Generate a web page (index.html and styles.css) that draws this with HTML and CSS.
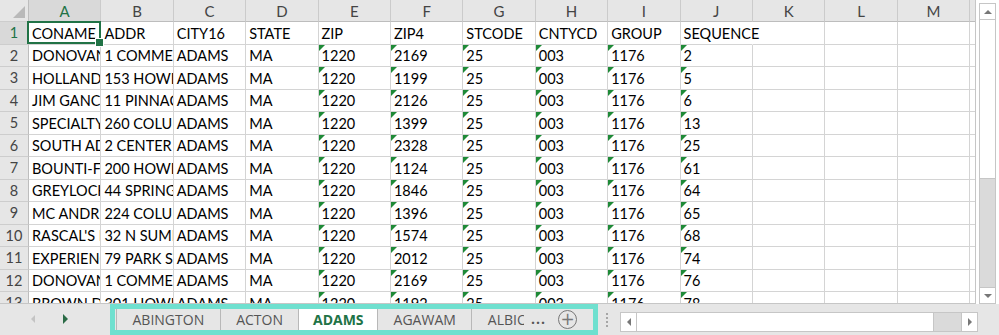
FILE: index.html
```html
<!DOCTYPE html>
<html lang="en">
<head>
    <meta charset="UTF-8">
    <meta name="viewport" content="width=device-width, initial-scale=1.0">
    <title>ADAMS - Sheet</title>
    <link rel="stylesheet" href="styles.css">
</head>
<body>
    <div class="window">
        <!-- Grid + vertical scrollbar -->
        <div class="main">
            <div class="sheet">
                <div class="row head">
                    <span class="corner"></span><span class="sel">A</span><span>B</span><span>C</span><span>D</span><span>E</span><span>F</span><span>G</span><span>H</span><span>I</span><span>J</span><span>K</span><span>L</span><span>M</span><span></span>
                </div>
                <div class="row">
                    <span class="sel">1</span><span class="cur">CONAME</span><span>ADDR</span><span>CITY16</span><span>STATE</span><span>ZIP</span><span>ZIP4</span><span>STCODE</span><span>CNTYCD</span><span>GROUP</span><span class="spill">SEQUENCE</span><span></span><span></span><span></span><span></span>
                </div>
                <div class="row">
                    <span>2</span><span>DONOVAN AUTO</span><span>1 COMMERCIAL ST</span><span>ADAMS</span><span>MA</span><span class="t">1220</span><span class="t">2169</span><span class="t">25</span><span class="t">003</span><span class="t">1176</span><span class="t">2</span><span></span><span></span><span></span><span></span>
                </div>
                <div class="row">
                    <span>3</span><span>HOLLAND</span><span>153 HOWLAND AVE</span><span>ADAMS</span><span>MA</span><span class="t">1220</span><span class="t">1199</span><span class="t">25</span><span class="t">003</span><span class="t">1176</span><span class="t">5</span><span></span><span></span><span></span><span></span>
                </div>
                <div class="row">
                    <span>4</span><span>JIM GANCI INC</span><span>11 PINNACLE ST</span><span>ADAMS</span><span>MA</span><span class="t">1220</span><span class="t">2126</span><span class="t">25</span><span class="t">003</span><span class="t">1176</span><span class="t">6</span><span></span><span></span><span></span><span></span>
                </div>
                <div class="row">
                    <span>5</span><span>SPECIALTY MINERALS</span><span>260 COLUMBIA ST</span><span>ADAMS</span><span>MA</span><span class="t">1220</span><span class="t">1399</span><span class="t">25</span><span class="t">003</span><span class="t">1176</span><span class="t">13</span><span></span><span></span><span></span><span></span>
                </div>
                <div class="row">
                    <span>6</span><span>SOUTH ADAMS</span><span>2 CENTER ST</span><span>ADAMS</span><span>MA</span><span class="t">1220</span><span class="t">2328</span><span class="t">25</span><span class="t">003</span><span class="t">1176</span><span class="t">25</span><span></span><span></span><span></span><span></span>
                </div>
                <div class="row">
                    <span>7</span><span>BOUNTI-FUL</span><span>200 HOWLAND AVE</span><span>ADAMS</span><span>MA</span><span class="t">1220</span><span class="t">1124</span><span class="t">25</span><span class="t">003</span><span class="t">1176</span><span class="t">61</span><span></span><span></span><span></span><span></span>
                </div>
                <div class="row">
                    <span>8</span><span>GREYLOCK FED</span><span>44 SPRING ST</span><span>ADAMS</span><span>MA</span><span class="t">1220</span><span class="t">1846</span><span class="t">25</span><span class="t">003</span><span class="t">1176</span><span class="t">64</span><span></span><span></span><span></span><span></span>
                </div>
                <div class="row">
                    <span>9</span><span>MC ANDREWS</span><span>224 COLUMBIA ST</span><span>ADAMS</span><span>MA</span><span class="t">1220</span><span class="t">1396</span><span class="t">25</span><span class="t">003</span><span class="t">1176</span><span class="t">65</span><span></span><span></span><span></span><span></span>
                </div>
                <div class="row">
                    <span>10</span><span>RASCAL'S PUB</span><span>32 N SUMMER ST</span><span>ADAMS</span><span>MA</span><span class="t">1220</span><span class="t">1574</span><span class="t">25</span><span class="t">003</span><span class="t">1176</span><span class="t">68</span><span></span><span></span><span></span><span></span>
                </div>
                <div class="row">
                    <span>11</span><span>EXPERIENCE</span><span>79 PARK ST</span><span>ADAMS</span><span>MA</span><span class="t">1220</span><span class="t">2012</span><span class="t">25</span><span class="t">003</span><span class="t">1176</span><span class="t">74</span><span></span><span></span><span></span><span></span>
                </div>
                <div class="row">
                    <span>12</span><span>DONOVAN AUTO</span><span>1 COMMERCIAL ST</span><span>ADAMS</span><span>MA</span><span class="t">1220</span><span class="t">2169</span><span class="t">25</span><span class="t">003</span><span class="t">1176</span><span class="t">76</span><span></span><span></span><span></span><span></span>
                </div>
                <div class="row">
                    <span>13</span><span>BROWN DRUG</span><span>301 HOWLAND AVE</span><span>ADAMS</span><span>MA</span><span class="t">1220</span><span class="t">1192</span><span class="t">25</span><span class="t">003</span><span class="t">1176</span><span class="t">78</span><span></span><span></span><span></span><span></span>
                </div>
            </div>

            <!-- Vertical scrollbar -->
            <div class="vscroll">
                <div class="vbar">
                    <div class="sbtn"><i class="arr up"></i></div>
                    <div class="vthumb"></div>
                    <div class="track"></div>
                    <div class="sbtn down"><i class="arr dn"></i></div>
                </div>
            </div>
        </div>

        <!-- Sheet tabs + horizontal scrollbar -->
        <div class="bottom">
            <div class="nav">
                <i class="arr lt off"></i>
                <i class="arr rt on"></i>
            </div>
            <div class="tabbox">
                <div class="tabs">
                    <div class="tab">ABINGTON</div>
                    <div class="tab">ACTON</div>
                    <div class="tab active">ADAMS</div>
                    <div class="tab">AGAWAM</div>
                    <div class="tab">ALBION</div>
                </div>
                <div class="more">...</div>
                <div class="add">+</div>
            </div>
            <div class="split"></div>
            <div class="hscroll">
                <div class="sbtn side"><i class="arr lt"></i></div>
                <div class="hthumb"></div>
                <div class="track"></div>
                <div class="sbtn side end"><i class="arr rt"></i></div>
            </div>
        </div>
    </div>
</body>
</html>
```

FILE: styles.css
```css
* {
    box-sizing: border-box;
}

body {
    margin: 0;
    width: 999px;
    height: 335px;
    overflow: hidden;
    background: #fff;
    font-family: 'Lato', 'Noto Sans', sans-serif;
}

.window {
    display: flex;
    flex-direction: column;
    height: 335px;
}

/* Grid area */
.main {
    display: flex;
    height: 304px;
}

.sheet {
    width: 976px;
    height: 304px;
    overflow: hidden;
    border-right: 1px solid #c6c6c6;
    border-bottom: 1px solid #c6c6c6;
}

.row {
    display: grid;
    grid-template-columns: 29px repeat(13, 72.4px) 1fr;
    height: 22px;
    font-size: 14.5px;
    color: #000;
}

.row:nth-child(even) {
    height: 23px;
}

.row > span {
    display: flex;
    align-items: flex-end;
    padding: 0 3px 1px;
    line-height: 18px;
    white-space: nowrap;
    overflow: hidden;
    border-right: 1px solid #d4d4d4;
    border-bottom: 1px solid #d4d4d4;
}

/* Row numbers */
.row > span:first-child {
    justify-content: center;
    align-items: center;
    padding: 0;
    background: #e6e6e6;
    color: #444;
    border-right-color: #bdbdbd;
    border-bottom-color: #cdcdcd;
}

.row > span:last-child {
    border-right: none;
}

/* Column letters */
.head > span {
    justify-content: center;
    align-items: center;
    padding: 0;
    font-size: 15px;
    background: #e6e6e6;
    color: #444;
    border-right-color: #cbcbcb;
    border-bottom-color: #bdbdbd;
}

.head > span:last-child {
    border-right: none;
}

.row > span.sel {
    background: #d9d9d9;
    color: #217346;
}

.corner {
    position: relative;
}

.corner::after {
    content: "";
    position: absolute;
    right: 3px;
    bottom: 3px;
    border-bottom: 12px solid #b9b9b9;
    border-left: 12px solid transparent;
}

/* Active cell */
.row > span.cur {
    position: relative;
    overflow: visible;
}

.cur::after {
    content: "";
    position: absolute;
    left: -2px;
    top: -1px;
    right: -1px;
    bottom: 0;
    border: 2px solid #217346;
    z-index: 2;
}

.cur::before {
    content: "";
    position: absolute;
    right: -4px;
    bottom: -3px;
    width: 7px;
    height: 7px;
    background: #217346;
    border: 1px solid #fff;
    z-index: 3;
}

.row > span.spill {
    overflow: visible;
    border-right-color: transparent;
}

/* Number stored as text marker */
.t {
    position: relative;
}

.t::before {
    content: "";
    position: absolute;
    left: 0;
    top: 0;
    border-top: 6px solid #1e8a37;
    border-right: 6px solid transparent;
}

/* Scrollbars */
.vscroll {
    flex: 1;
    display: flex;
    padding: 3px 3px 0 3px;
}

.vbar {
    flex: 1;
    display: flex;
    flex-direction: column;
    border: 1px solid #c6c6c6;
    border-bottom: none;
}

.sbtn {
    display: flex;
    justify-content: center;
    align-items: center;
    height: 16px;
    background: #fff;
    border-bottom: 1px solid #c6c6c6;
}

.sbtn.down {
    border-bottom: 1px solid #c6c6c6;
    border-top: 1px solid #c6c6c6;
    height: 17px;
}

.vthumb {
    height: 159px;
    background: #fff;
    border-bottom: 1px solid #c6c6c6;
}

.track {
    flex: 1;
    background: #dadada;
}

.arr {
    display: block;
    width: 0;
    height: 0;
}

.arr.up {
    border-left: 4px solid transparent;
    border-right: 4px solid transparent;
    border-bottom: 4px solid #777;
}

.arr.dn {
    border-left: 4px solid transparent;
    border-right: 4px solid transparent;
    border-top: 4px solid #777;
}

.arr.lt {
    border-top: 4px solid transparent;
    border-bottom: 4px solid transparent;
    border-right: 4px solid #777;
}

.arr.rt {
    border-top: 4px solid transparent;
    border-bottom: 4px solid transparent;
    border-left: 4px solid #777;
}

/* Bottom bar */
.bottom {
    display: flex;
    height: 31px;
    background: #e6e6e6;
}

.nav {
    width: 110px;
    display: flex;
    align-items: center;
    gap: 28px;
    padding: 0 0 2px 31px;
}

.nav .arr.off {
    border-right-color: #c4c4c4;
}

.nav .arr.on {
    border-left-color: #2b6b46;
    border-top-width: 5px;
    border-bottom-width: 5px;
    border-left-width: 5px;
}

.tabbox {
    width: 488px;
    display: flex;
    border: 5px solid #6fe0cf;
}

.tabs {
    display: flex;
    width: 408px;
    overflow: hidden;
    border-left: 1px solid #b8b8b8;
    margin-left: 1px;
}

.tab {
    display: flex;
    align-items: center;
    padding: 0 15.5px 1px;
    white-space: nowrap;
    font-family: 'Open Sans', sans-serif;
    font-size: 14px;
    color: #555;
    border-right: 1px solid #b8b8b8;
}

.tab.active {
    background: #fff;
    color: #217346;
    font-weight: bold;
    padding: 0 13.5px 1px;
}

.more {
    display: flex;
    align-items: center;
    padding: 0 0 2px 7px;
    width: 34px;
    font-family: 'Open Sans', sans-serif;
    font-size: 14px;
    font-weight: bold;
    color: #555;
    letter-spacing: 1px;
}

.add {
    width: 19px;
    height: 19px;
    margin-top: 1px;
    border: 1.5px solid #777;
    border-radius: 50%;
    display: flex;
    justify-content: center;
    align-items: center;
    font-family: 'DejaVu Sans', sans-serif;
    font-size: 17px;
    line-height: 1;
    color: #777;
    padding-bottom: 1px;
}

.split {
    width: 22px;
    display: flex;
    justify-content: center;
    align-items: center;
}

.split::before {
    content: "";
    width: 0;
    height: 14px;
    border-left: 2px dotted #a6a6a6;
    margin-left: -5px;
}

.hscroll {
    width: 358px;
    height: 20px;
    margin-top: 8px;
    display: flex;
    border: 1px solid #c6c6c6;
}

.sbtn.side {
    width: 16px;
    height: auto;
    border-bottom: none;
    border-right: 1px solid #c6c6c6;
}

.sbtn.side.end {
    border-right: none;
    border-left: 1px solid #c6c6c6;
}

.hthumb {
    width: 297px;
    background: #fff;
    border-right: 1px solid #c6c6c6;
}
```
